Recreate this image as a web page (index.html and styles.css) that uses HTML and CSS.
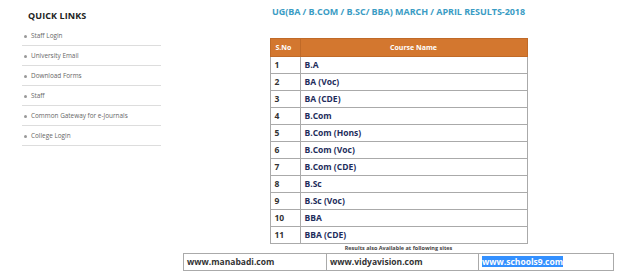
FILE: index.html
```html
<!DOCTYPE html>
<html>
<head>
<meta charset="utf-8">
<link rel="stylesheet" href="styles.css">
</head>
<body>
<div class="page">
  <aside class="sidebar">
    <h3 class="side-title">QUICK LINKS</h3>
    <ul class="links">
      <li>Staff Login</li>
      <li>University Email</li>
      <li>Download Forms</li>
      <li>Staff</li>
      <li>Common Gateway for e-Journals</li>
      <li>College Login</li>
    </ul>
  </aside>
  <main class="content">
    <h2 class="title">UG(BA / B.COM / B.SC/ BBA) MARCH / APRIL RESULTS-2018</h2>
    <table class="results">
      <thead>
        <tr><th class="sno">S.No</th><th>Course Name</th></tr>
      </thead>
      <tbody>
        <tr><td class="sno">1</td><td>B.A</td></tr>
        <tr><td class="sno">2</td><td>BA (Voc)</td></tr>
        <tr><td class="sno">3</td><td>BA (CDE)</td></tr>
        <tr><td class="sno">4</td><td>B.Com</td></tr>
        <tr><td class="sno">5</td><td>B.Com (Hons)</td></tr>
        <tr><td class="sno">6</td><td>B.Com (Voc)</td></tr>
        <tr><td class="sno">7</td><td>B.Com (CDE)</td></tr>
        <tr><td class="sno">8</td><td>B.Sc</td></tr>
        <tr><td class="sno">9</td><td>B.Sc (Voc)</td></tr>
        <tr><td class="sno">10</td><td>BBA</td></tr>
        <tr><td class="sno">11</td><td>BBA (CDE)</td></tr>
      </tbody>
    </table>
    <p class="also">Results also Available at following sites</p>
    <table class="sites">
      <tr>
        <td class="c1">www.manabadi.com</td>
        <td class="c2">www.vidyavision.com</td>
        <td class="c3"><span class="sel">www.schools9.com</span></td>
      </tr>
    </table>
  </main>
</div>
</body>
</html>
```
FILE: styles.css
```css
html, body {
  margin: 0;
  padding: 0;
  background: #fff;
}
body {
  font-family: "Open Sans", "DejaVu Sans", sans-serif;
  width: 640px;
  height: 278px;
  overflow: hidden;
}
.page {
  display: flex;
}
.sidebar {
  width: 139px;
  margin-left: 22px;
  padding-top: 9px;
}
.side-title {
  margin: 0 0 0 6px;
  font-size: 9px;
  font-weight: 700;
  color: #222;
  line-height: 14px;
  letter-spacing: 0.1px;
}
.links {
  list-style: none;
  margin: 3px 0 0 0;
  padding: 0;
}
.links li {
  position: relative;
  height: 19px;
  line-height: 19px;
  border-bottom: 1px solid #ddd;
  font-size: 6.4px;
  color: #666;
  padding-left: 9px;
}
.links li::before {
  content: "";
  position: absolute;
  left: 2px;
  top: 9px;
  width: 3px;
  height: 3px;
  border-radius: 50%;
  background: #999;
}
.content {
  width: 457px;
  margin-left: 9px;
  display: flex;
  flex-direction: column;
  align-items: center;
}
.title {
  margin: 6px 0 0 0;
  font-size: 9px;
  line-height: 12px;
  font-weight: 700;
  color: #3a9cc4;
  letter-spacing: -0.05px;
}
.results {
  margin-top: 20px;
  width: 258px;
  border-collapse: collapse;
  font-size: 8.5px;
}
.results th {
  background: #d3772f;
  color: #fff;
  font-weight: 700;
  height: 17px;
  line-height: 10px;
  padding: 0;
  border: 1px solid #c06a28;
  font-size: 7px;
}
.results th.sno {
  text-align: left;
  padding-left: 5px;
}
.results td {
  height: 16px;
  line-height: 10px;
  padding: 0 0 0 4px;
  border: 1px solid #aaa;
  color: #1e2d5c;
  font-weight: 700;
}
.results td.sno {
  width: 25px;
  color: #333;
}
.also {
  margin: 0;
  font-size: 5.5px;
  line-height: 9px;
  font-weight: 700;
  color: #444;
}
.sites {
  margin-top: 0;
  width: 431px;
  border-collapse: collapse;
  font-size: 8.5px;
  font-weight: 700;
  color: #333;
}
.sites td {
  height: 16px;
  line-height: 10px;
  padding: 0 0 0 3px;
  border: 1px solid #aaa;
}
.sites .c1 { width: 139px; }
.sites .c2 { width: 148px; }
.sel {
  background: #3390ff;
  color: #fff;
}
```
